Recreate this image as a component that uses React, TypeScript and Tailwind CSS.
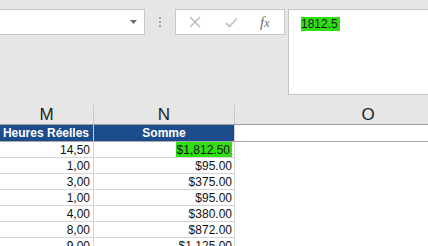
import React from "react";

const rows = [
  ["14,50", "$1,812.50"],
  ["1,00", "$95.00"],
  ["3,00", "$375.00"],
  ["1,00", "$95.00"],
  ["4,00", "$380.00"],
  ["8,00", "$872.00"],
  ["9,00", "$1,125.00"],
];

export default function App() {
  return (
    <div className="w-[428px] h-[246px] overflow-hidden bg-[#e6e6e6] font-['Liberation_Sans',Arial,sans-serif]">
      {/* formula bar */}
      <div className="flex items-start pt-[9px] h-[105px]">
        <div className="w-[145px] shrink-0 h-[26px] bg-white border border-l-0 border-[#c6c6c6] flex items-center justify-end pr-[7px]">
          <svg width="7" height="4" viewBox="0 0 7 4">
            <path d="M0 0h7L3.5 4z" fill="#6b6b6b" />
          </svg>
        </div>
        <div className="w-[30px] shrink-0 h-[26px] flex flex-col items-center justify-center gap-[2px]">
          <span className="w-[2px] h-[2px] bg-[#a6a6a6]" />
          <span className="w-[2px] h-[2px] bg-[#a6a6a6]" />
          <span className="w-[2px] h-[2px] bg-[#a6a6a6]" />
        </div>
        <div className="w-[110px] shrink-0 h-[26px] bg-white border border-[#c6c6c6] flex items-center">
          <svg width="12" height="12" viewBox="0 0 12 12" className="ml-[13px]">
            <path d="M1 1l10 10M11 1L1 11" stroke="#b4b4b4" strokeWidth="1.3" />
          </svg>
          <svg width="13" height="11" viewBox="0 0 13 11" className="ml-[24px]">
            <path d="M1 6l3.5 3.5L12 1.5" stroke="#c4c4c4" strokeWidth="1.8" fill="none" />
          </svg>
          <span className="ml-[22px] text-[15px] leading-none italic text-[#6e6e6e] font-['Liberation_Serif',serif]">
            f<span className="text-[12px]">x</span>
          </span>
        </div>
        <div className="ml-[3px] flex-1 h-[86px] bg-white border border-r-0 border-[#c6c6c6] pl-[12px] pt-[7px]">
          <div className="w-fit bg-[#2ee011] text-[12px] leading-[14px] text-[#1b1b1b] pr-[2px]">1812.5</div>
        </div>
      </div>

      {/* column letters */}
      <div className="flex h-[20px] border-b border-[#9e9e9e]">
        <div className="w-[94px] shrink-0 border-r border-[#c8c8c8] flex items-center justify-center text-[17px] text-[#222]">M</div>
        <div className="w-[141px] shrink-0 border-r border-[#c8c8c8] flex items-center justify-center text-[17px] text-[#222]">N</div>
        <div className="w-[266px] shrink-0 flex items-center justify-center text-[17px] text-[#222]">O</div>
      </div>

      {/* sheet */}
      <div className="bg-white">
        <div className="flex h-[17px] border-b border-[#a8a8a8]">
          <div className="w-[94px] shrink-0 bg-[#1c4c8c] border-r border-[#d0d0d0] flex items-center justify-end pr-[4px] text-[12px] font-bold text-white whitespace-nowrap">
            Heures Réelles
          </div>
          <div className="w-[141px] shrink-0 bg-[#1c4c8c] border-r border-[#d0d0d0] flex items-center justify-center text-[12px] font-bold text-white">
            Somme
          </div>
          <div className="flex-1" />
        </div>
        {rows.map(([h, s], i) => (
          <div key={i} className="flex h-[16px]">
            <div className="w-[94px] shrink-0 border-r border-b border-[#d4d4d4] flex items-center justify-end pr-[3px] text-[12px] text-[#111]">
              {h}
            </div>
            <div className="w-[141px] shrink-0 border-r border-b border-r-[#d3dccb] border-b-[#d4d4d4] flex items-center justify-end pr-[2px] text-[12px] text-[#111]">
              {i === 0 ? <span className="bg-[#2ee011] h-[15px] flex items-center pl-[1px] pr-[2px]">{s}</span> : s}
            </div>
            <div className="flex-1" />
          </div>
        ))}
      </div>
    </div>
  );
}
